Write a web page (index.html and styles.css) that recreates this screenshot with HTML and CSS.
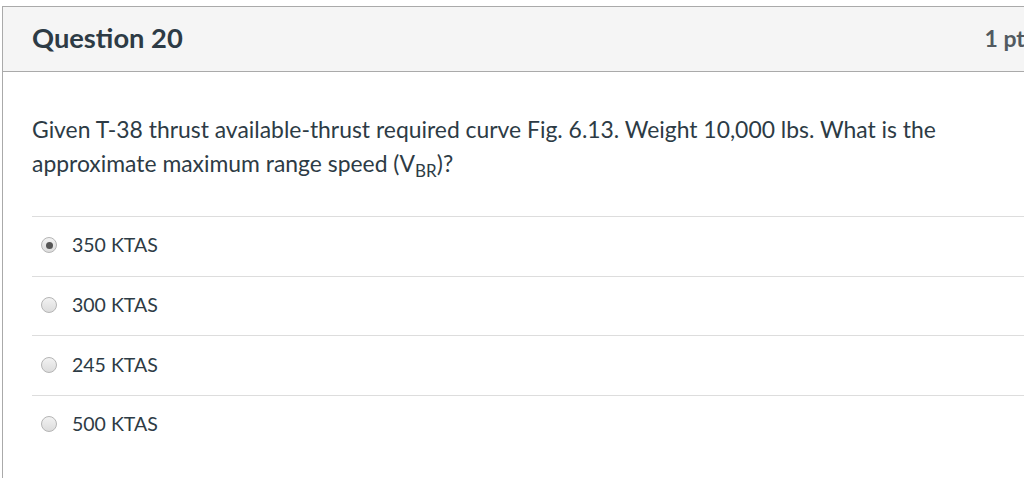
FILE: index.html
```html
<!DOCTYPE html>
<html>
<head>
<meta charset="utf-8">
<link rel="stylesheet" href="styles.css">
</head>
<body>
<div class="question">
  <div class="header">
    <h2 class="title">Question 20</h2>
    <span class="points">1 pts</span>
  </div>
  <div class="content">
    <p class="text">Given T-38 thrust available-thrust required curve Fig. 6.13. Weight 10,000 lbs. What is the approximate maximum range speed (V<sub>BR</sub>)?</p>
    <div class="answers">
      <label class="answer"><span class="radio checked"></span><span class="label">350 KTAS</span></label>
      <label class="answer"><span class="radio"></span><span class="label">300 KTAS</span></label>
      <label class="answer"><span class="radio"></span><span class="label">245 KTAS</span></label>
      <label class="answer"><span class="radio"></span><span class="label">500 KTAS</span></label>
    </div>
  </div>
</div>
</body>
</html>
```

FILE: styles.css
```css
html, body {
  margin: 0;
  padding: 0;
  background: #fff;
  overflow: hidden;
  width: 1024px;
  height: 478px;
}
body {
  font-family: Lato, "Liberation Sans", sans-serif;
  color: #2d3b45;
}
.question {
  margin: 6px 0 0 2px;
  width: 1064px;
  border: 1px solid #aaaaaa;
  border-bottom: none;
  height: 480px;
  box-sizing: border-box;
}
.header {
  height: 64px;
  background: #f5f5f5;
  border-bottom: 1px solid #aaaaaa;
  display: flex;
  align-items: center;
  justify-content: space-between;
  padding: 0 30px 0 29px;
}
.title {
  margin: 0;
  font-size: 27.3px;
  font-weight: 700;
  color: #2d3b45;
  line-height: 1;
  padding-bottom: 3px;
}
.points {
  font-size: 23px;
  font-weight: 700;
  color: #525a60;
  padding-bottom: 3px;
}
.content {
  padding: 40px 0 0 29px;
}
.text {
  margin: 0;
  font-size: 22.9px;
  line-height: 34px;
  width: 940px;
}
.text sub {
  font-size: 17px;
  vertical-align: -5px;
  line-height: 0;
}
.answers {
  margin-top: 36px;
}
.answer {
  display: flex;
  align-items: center;
  height: 55.7px;
  border-top: 1px solid #dddddd;
  padding: 0 0 3px 9px;
  box-sizing: content-box;
}
.radio {
  width: 16px;
  height: 16px;
  border-radius: 50%;
  box-sizing: border-box;
  border: 1px solid #b5b5b5;
  background: linear-gradient(#f2f2f2, #dcdcdc);
  display: flex;
  align-items: center;
  justify-content: center;
  margin-right: 15px;
  margin-top: 1px;
}
.radio.checked::after {
  content: "";
  width: 7px;
  height: 7px;
  border-radius: 50%;
  background: #555;
}
.label {
  font-size: 19.5px;
  color: #2d3b45;
}
```
